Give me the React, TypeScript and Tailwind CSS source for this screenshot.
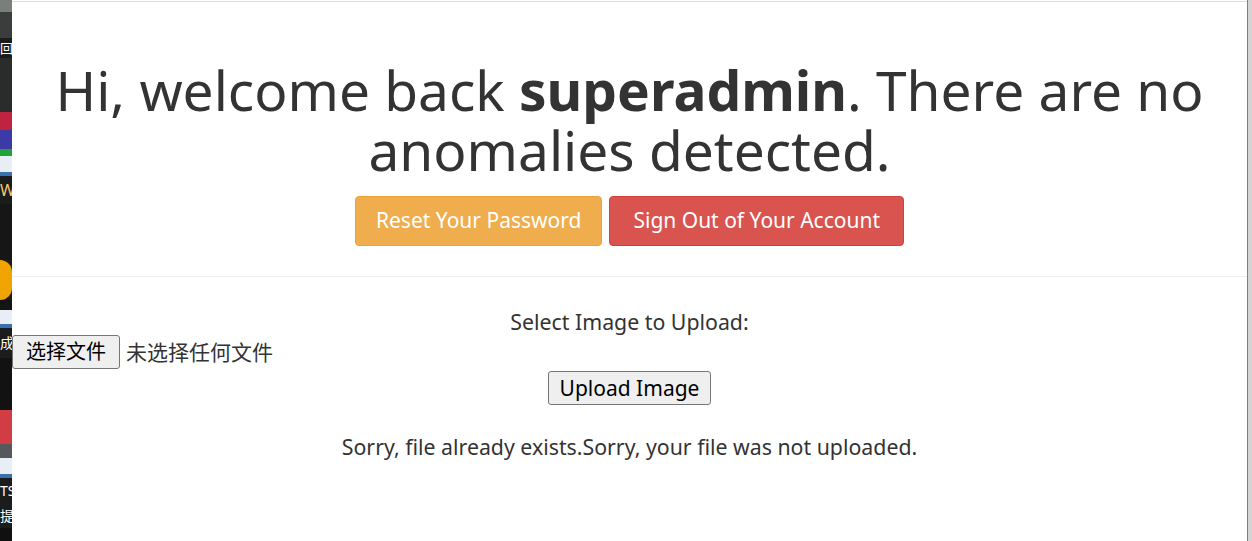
import React from "react";

const latin = "font-['Noto_Sans','Noto_Sans_CJK_SC',sans-serif]";

function DesktopStrip() {
    return (
        <div className="w-[12px] shrink-0 h-full flex flex-col bg-[#1b1c1c] overflow-hidden">
            <div className="h-[12px] bg-[#7a7f7c]" />
            <div className="h-[26px] bg-[#3a3d3c]" />
            <div className="h-[20px] flex items-center text-[13px] text-white leading-none">回</div>
            <div className="h-[54px] bg-[#2a2c2b]" />
            <div className="h-[18px] bg-[#c0233f]" />
            <div className="h-[19px] bg-[#3b3aa6]" />
            <div className="h-[7px] bg-[#22a33a]" />
            <div className="h-[20px] bg-[#e8eef5] border-b-4 border-[#3a6fb0]" />
            <div className="h-[28px] flex items-center text-[16px] text-[#f3c86a] leading-none">W</div>
            <div className="h-[56px] bg-[#161616]" />
            <div className="h-[40px] bg-[#f0a400] rounded-r-full" />
            <div className="h-[10px] bg-[#141414]" />
            <div className="h-[18px] bg-[#e8eef5] border-b-4 border-[#3a6fb0]" />
            <div className="h-[30px] flex items-center text-[14px] text-white leading-none">成</div>
            <div className="h-[52px] bg-[#121212]" />
            <div className="h-[34px] bg-[#d23c44]" />
            <div className="h-[14px] bg-[#55595c]" />
            <div className="h-[20px] bg-[#e8eef5] border-b-4 border-[#3a6fb0]" />
            <div className="h-[26px] flex items-center text-[14px] text-white leading-none">TS</div>
            <div className="h-[24px] flex items-center text-[14px] text-white leading-none">提</div>
            <div className="flex-1 bg-[#101010]" />
        </div>
    );
}

export default function App() {
    return (
        <div className={`flex w-[1252px] h-[541px] overflow-hidden bg-white text-[#333] ${latin}`}>
            <DesktopStrip />

            <div className="flex-1 flex flex-col pt-px">
                <div className="border-t border-[#dcdcdc] flex-1 flex flex-col">
                    {/* Jumbotron */}
                    <div className="pt-[58px] pb-[30px] text-center">
                        <h1 className="text-[55px] leading-[60px] font-normal px-[30px]">
                            Hi, welcome back <b className="font-bold">superadmin</b>. There are no
                            anomalies detected.
                        </h1>
                        <div className="flex justify-center gap-[7px] mt-[16px]">
                            <button className="h-[50px] px-[20px] rounded-[4px] bg-[#f0ad4e] border border-[#eea236] text-white text-[21px]">
                                Reset Your Password
                            </button>
                            <button className="h-[50px] px-[23px] rounded-[4px] bg-[#d9534f] border border-[#d43f3a] text-white text-[21px]">
                                Sign Out of Your Account
                            </button>
                        </div>
                    </div>

                    <hr className="border-t border-[#eeeeee]" />

                    {/* Upload form */}
                    <div className="pt-[32px] text-[21.3px] leading-[26px]">
                        <div className="text-center">Select Image to Upload:</div>
                        <div className="flex items-center">
                            <button className="h-[34px] px-[13px] bg-[#efefef] border border-[#767676] rounded-[3px] text-[20px] text-black">
                                选择文件
                            </button>
                            <span className="ml-[6px] text-[21px]">未选择任何文件</span>
                        </div>
                        <div className="flex justify-center mt-[2px]">
                            <button className="h-[34px] px-[11px] bg-[#efefef] border border-[#767676] rounded-[3px] text-[21px] text-black">
                                Upload Image
                            </button>
                        </div>
                        <p className="text-center mt-[29px]">
                            Sorry, file already exists.Sorry, your file was not uploaded.
                        </p>
                    </div>
                </div>
            </div>

            <div className="w-[5px] shrink-0 border-l border-[#7f7f7f] bg-[#d4d4d4]" />
        </div>
    );
}
